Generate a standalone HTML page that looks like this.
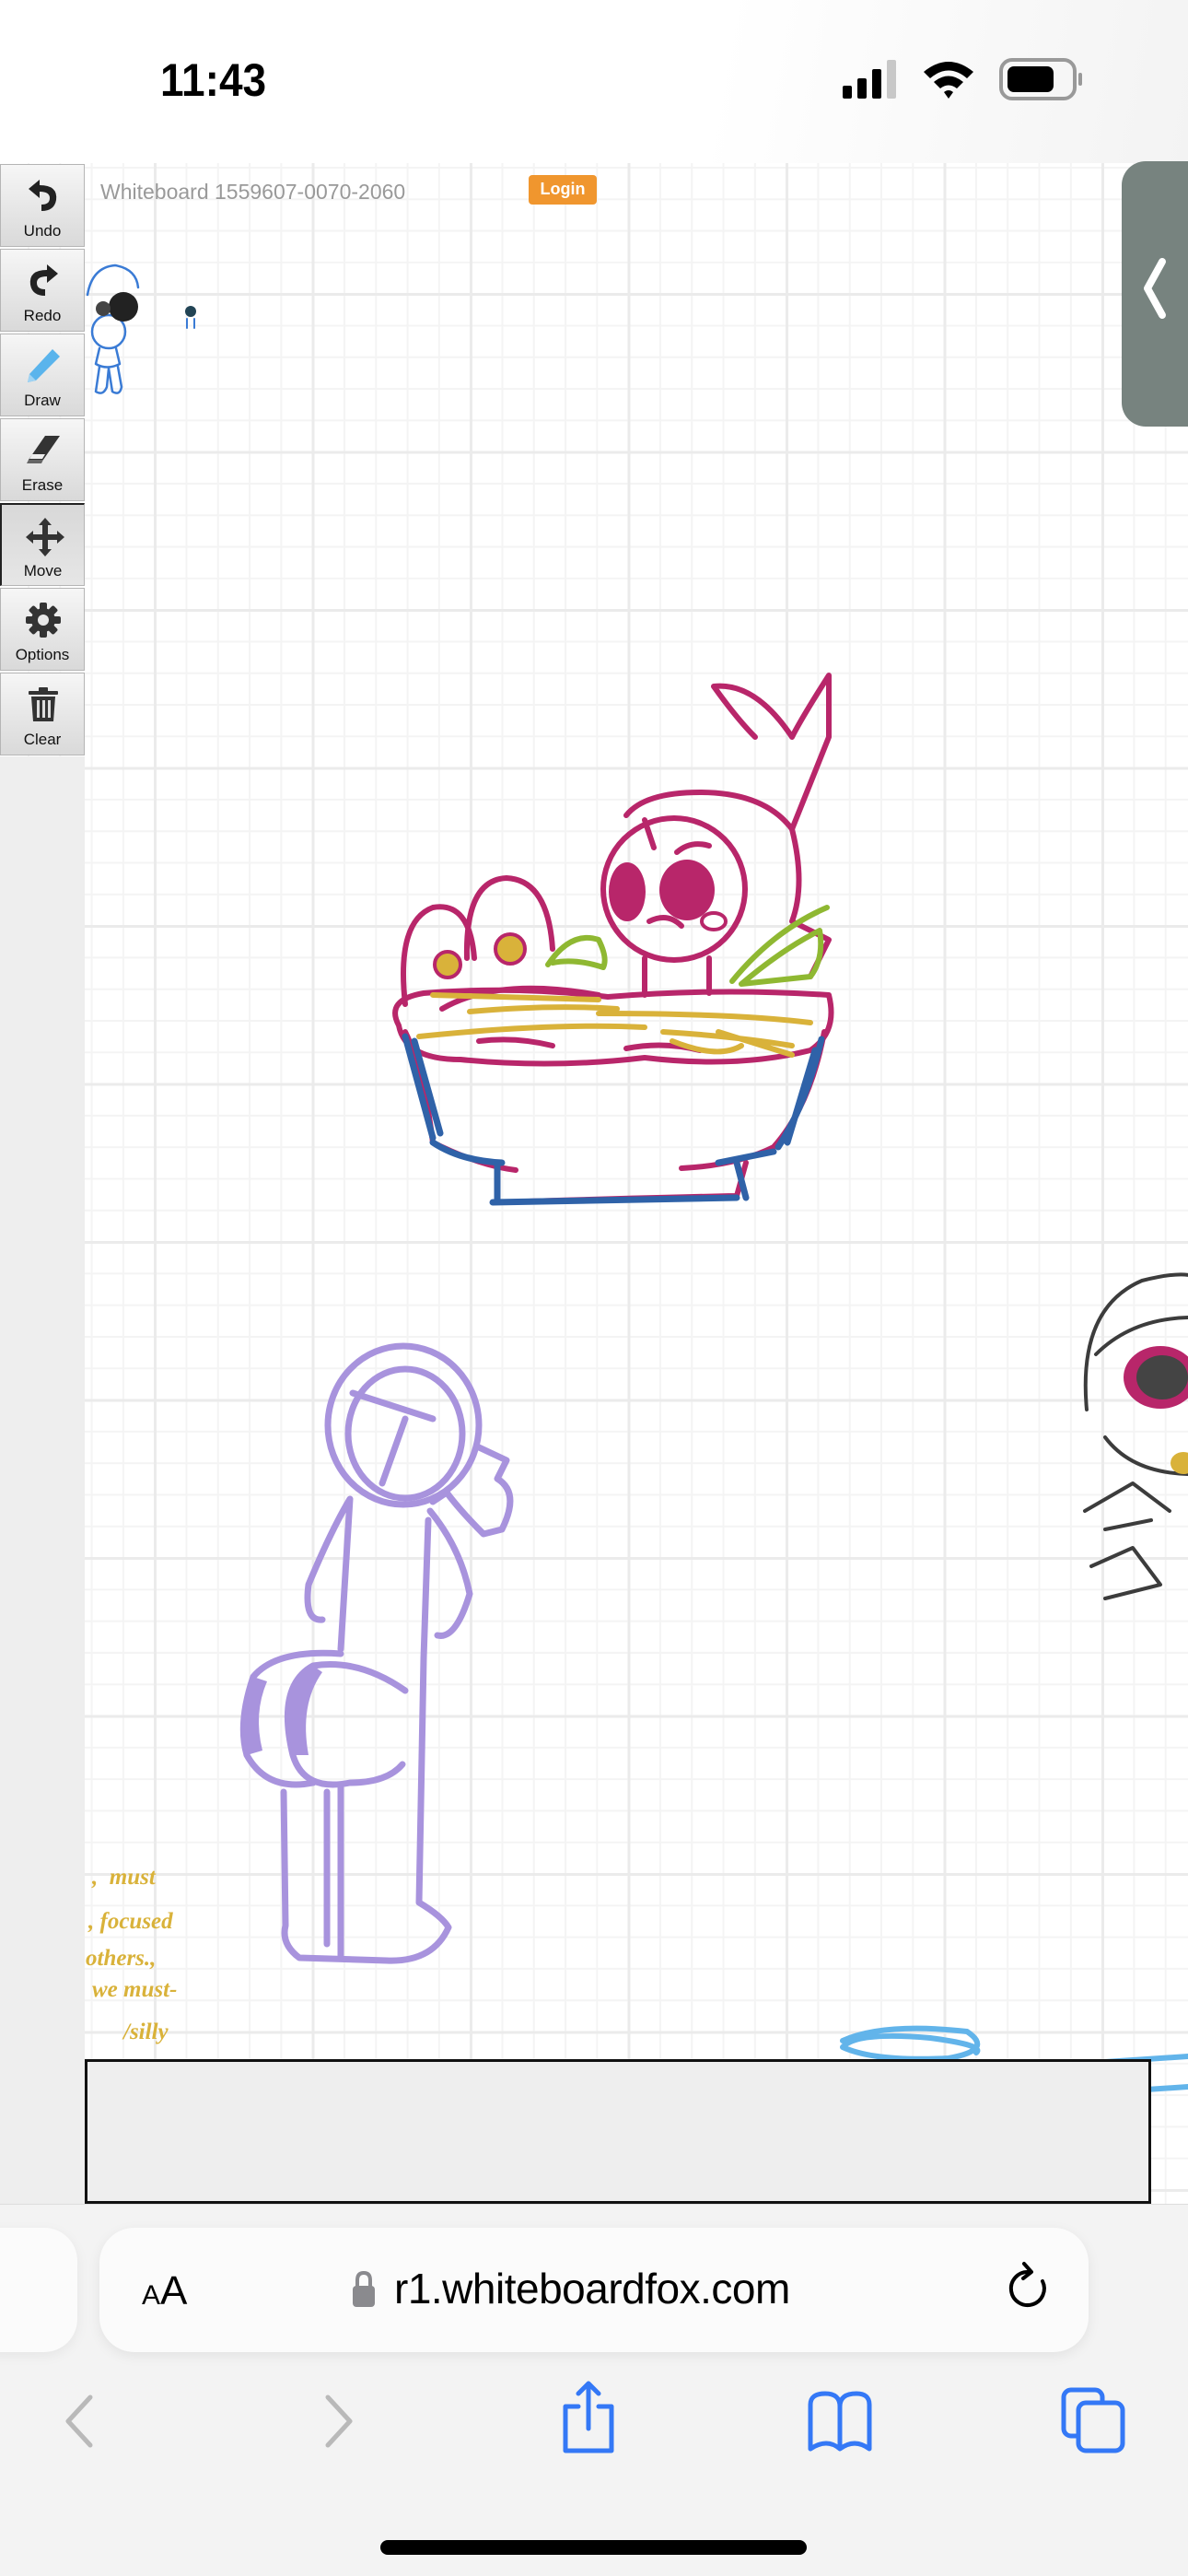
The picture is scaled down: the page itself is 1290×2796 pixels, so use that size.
<!DOCTYPE html>
<html><head><meta charset="utf-8">
<style>
*{margin:0;padding:0;box-sizing:border-box}
html,body{width:1290px;height:2796px;overflow:hidden;background:#fff;font-family:"Liberation Sans",sans-serif}
#canvas{position:absolute;left:0;top:177px;width:1290px;height:2215px;background-color:#fff;
background-image:
linear-gradient(to right,#ebebeb 0,#ebebeb 3px,transparent 3px),
linear-gradient(to bottom,#ebebeb 0,#ebebeb 3px,transparent 3px),
linear-gradient(to right,#f4f4f4 0,#f4f4f4 2px,transparent 2px),
linear-gradient(to bottom,#f4f4f4 0,#f4f4f4 2px,transparent 2px);
background-size:171.5px 100%,100% 171.5px,34.3px 100%,100% 34.3px;
background-position:167px 0,0 141px,30px 0,0 4px}
.btn{position:absolute;left:0;width:92px;height:90px;background:linear-gradient(#f6f6f6,#d9d9d9);border:1px solid #b5b5b5;text-align:center}
.btn span{position:absolute;left:0;right:0;top:62px;font-size:17px;color:#111}
.btn svg{position:absolute;left:26px;top:14px}
.mv{border-left:2px solid #222;border-top:2px solid #222;background:linear-gradient(#d8d8d8,#e6e6e6)}
.yt div{position:absolute;white-space:nowrap}
</style></head><body>
<div id="canvas"></div>
<div style="position:absolute;left:0;top:821px;width:92px;height:1571px;background:#eeeeee"></div>
<!-- status bar -->
<div style="position:absolute;left:0;top:0;width:1290px;height:177px;background:linear-gradient(100deg,#fff 60%,#f3f3f3)"></div>
<div style="position:absolute;left:174px;top:58px;font-size:50px;font-weight:bold;color:#000;transform:scaleX(0.92);transform-origin:left">11:43</div>
<svg style="position:absolute;left:910px;top:60px" width="270" height="52" viewBox="0 0 270 52">
<rect x="5" y="33" width="10" height="14" rx="2"/><rect x="21" y="25" width="10" height="22" rx="2"/><rect x="37" y="15" width="10" height="32" rx="2"/><rect x="53" y="5" width="10" height="42" rx="2" fill="#c8c8c8"/>
<path d="M93 18 Q120 -4 147 18 L140 25 Q120 8 100 25Z M104 29 Q120 16 136 29 L129 36 Q120 29 111 36Z M115 40 Q120 36 125 40 L120 47Z"/>
<rect x="177" y="5" width="80" height="42" rx="12" fill="none" stroke="#999" stroke-width="4"/><rect x="184" y="12" width="50" height="28" rx="7"/><rect x="261" y="19" width="4" height="14" rx="2" fill="#999"/>
</svg>
<!-- toolbar -->
<div class="btn" style="top:178px"><svg width="40" height="40" viewBox="0 0 40 40"><path d="M4 12 L16 2 L16 8 Q36 8 34 24 Q32 36 18 36 L18 29 Q27 29 27 22 Q27 15 16 15 L16 22Z" fill="#222"/></svg><span>Undo</span></div>
<div class="btn" style="top:270px"><svg width="40" height="40" viewBox="0 0 40 40"><path d="M36 12 L24 2 L24 8 Q4 8 6 24 Q8 36 22 36 L22 29 Q13 29 13 22 Q13 15 24 15 L24 22Z" fill="#222"/></svg><span>Redo</span></div>
<div class="btn" style="top:362px"><svg width="40" height="40" viewBox="0 0 40 40"><path d="M30 2 L38 10 L12 36 L3 38 L5 29Z" fill="#5ab4ec"/><path d="M5 29 L3 38 L12 36Z" fill="#9fd3f3"/></svg><span>Draw</span></div>
<div class="btn" style="top:454px"><svg width="40" height="40" viewBox="0 0 40 40"><path d="M22 4 L38 4 L20 30 L4 30Z" fill="#333"/><path d="M4 30 L20 30 L18 34 L2 34Z" fill="#666"/><path d="M8 24 L22 24 L19 29 L5 29Z" fill="#eee"/></svg><span>Erase</span></div>
<div class="btn mv" style="top:546px"><svg width="42" height="42" viewBox="0 0 42 42"><path d="M21 0 L28 8 L24 8 L24 18 L34 18 L34 14 L42 21 L34 28 L34 24 L24 24 L24 34 L28 34 L21 42 L14 34 L18 34 L18 24 L8 24 L8 28 L0 21 L8 14 L8 18 L18 18 L18 8 L14 8Z" fill="#333"/></svg><span>Move</span></div>
<div class="btn" style="top:638px"><svg width="40" height="40" viewBox="0 0 40 40"><g fill="#333"><circle cx="20" cy="20" r="13"/><rect x="16" y="1" width="8" height="38" rx="2"/><rect x="16" y="1" width="8" height="38" rx="2" transform="rotate(45 20 20)"/><rect x="16" y="1" width="8" height="38" rx="2" transform="rotate(90 20 20)"/><rect x="16" y="1" width="8" height="38" rx="2" transform="rotate(135 20 20)"/></g><circle cx="20" cy="20" r="6" fill="#e8e8e8"/></svg><span>Options</span></div>
<div class="btn" style="top:730px"><svg width="40" height="40" viewBox="0 0 40 40"><g fill="#333"><rect x="4" y="5" width="32" height="4" rx="1"/><rect x="15" y="1" width="10" height="5" rx="1"/><path d="M7 11 L33 11 L31 38 L9 38Z"/></g><g fill="#ddd"><rect x="13" y="15" width="3" height="19"/><rect x="19" y="15" width="3" height="19"/><rect x="25" y="15" width="3" height="19"/></g></svg><span>Clear</span></div>
<div style="position:absolute;left:109px;top:195px;font-size:23px;color:#999">Whiteboard 1559607-0070-2060</div>
<div style="position:absolute;left:574px;top:190px;width:74px;height:32px;background:#f0962e;border-radius:4px;color:#fff;font-weight:bold;font-size:18px;text-align:center;line-height:30px">Login</div>
<!-- right tab -->
<div style="position:absolute;left:1218px;top:175px;width:90px;height:288px;background:#77837f;border-radius:26px 0 0 26px"></div>
<svg style="position:absolute;left:1238px;top:278px" width="30" height="70" viewBox="0 0 30 70"><path d="M24 6 L8 35 L24 64" stroke="#fff" stroke-width="8" fill="none" stroke-linecap="round" stroke-linejoin="round"/></svg>
<!-- drawings -->
<svg style="position:absolute;left:0;top:0" width="1290" height="2796" viewBox="0 0 1290 2796" fill="none" stroke-linecap="round" stroke-linejoin="round">
<g stroke="#3a7bd5" stroke-width="2.5">
<path d="M95 320 Q100 290 125 288 Q148 292 150 312"/><ellipse cx="118" cy="360" rx="18" ry="18"/><path d="M108 378 L104 395 Q116 402 130 395 L126 378"/><path d="M108 398 L104 425 Q112 430 116 420 L118 400 L122 425 Q130 430 132 420 L128 398"/>
</g>
<circle cx="134" cy="333" r="16" fill="#222"/><circle cx="112" cy="335" r="8" fill="#444"/>
<circle cx="207" cy="338" r="6" fill="#245" /><path d="M203 346 L203 356 M211 346 L211 356" stroke="#3a7bd5" stroke-width="2"/>
<g stroke="#b8266a" stroke-width="6">
<path d="M433 1113 Q418 1085 460 1078 Q560 1070 660 1082 Q780 1072 900 1080 Q910 1120 880 1140 Q800 1160 700 1148 Q600 1160 500 1150 Q440 1150 433 1113Z"/>
<path d="M440 1120 Q460 1160 470 1240 Q520 1265 560 1270 M895 1120 Q880 1200 840 1245 Q800 1265 740 1268"/>
<path d="M540 1265 L540 1305 Q700 1300 800 1298 L810 1262"/>
<path d="M440 1090 Q430 1000 470 985 Q510 978 515 1040 M507 1040 Q505 955 550 953 Q595 955 600 1030"/>
<path d="M480 1095 Q540 1060 650 1080 M520 1130 Q560 1125 600 1135 M680 1138 Q720 1130 760 1140"/>
<circle cx="732" cy="965" r="77"/>
<path d="M680 885 Q700 860 760 860 Q830 860 860 900 Q880 850 900 800 L900 733 Q870 780 860 800 Q820 740 775 745 Q800 780 820 800"/>
<path d="M860 900 Q875 960 860 1000 L900 1020 L880 1060"/>
<path d="M700 1040 L700 1080 M770 1040 L770 1078 M705 1000 Q725 990 740 1005"/>
<path d="M700 890 L710 920 M735 925 Q750 912 770 918"/>
</g>
<ellipse cx="681" cy="968" rx="20" ry="32" fill="#b8266a"/>
<ellipse cx="746" cy="966" rx="30" ry="33" fill="#b8266a"/>
<ellipse cx="775" cy="1000" rx="13" ry="9" fill="#fff" stroke="#b8266a" stroke-width="4"/>
<circle cx="486" cy="1047" r="14" fill="#d9b23a" stroke="#b8266a" stroke-width="4"/>
<circle cx="554" cy="1030" r="16" fill="#d9b23a" stroke="#b8266a" stroke-width="4"/>
<g stroke="#d9b23a" stroke-width="6">
<path d="M470 1080 L650 1085 M510 1098 Q600 1090 670 1095 M455 1125 Q600 1110 700 1115 M650 1100 Q800 1100 880 1110 M720 1120 Q800 1125 860 1135 M730 1130 Q780 1150 805 1135 M780 1120 L860 1145"/>
</g>
<g stroke="#8fb832" stroke-width="6">
<path d="M595 1047 Q620 1010 650 1020 Q660 1040 655 1050 Q625 1040 600 1045 M795 1065 Q840 1010 898 985 M805 1068 Q850 1030 890 1010 Q895 1040 880 1060Z"/>
</g>
<g stroke="#2f62a8" stroke-width="7">
<path d="M440 1125 Q455 1180 470 1235 M450 1130 L478 1230 M470 1240 Q500 1260 545 1262 M540 1262 L540 1305 M535 1305 L800 1300 M800 1262 L810 1300 M780 1262 L840 1250 M892 1128 Q875 1200 845 1245 M885 1140 L855 1240"/>
</g>
<g stroke="#a893dd" stroke-width="7">
<ellipse cx="438" cy="1547" rx="82" ry="86"/>
<ellipse cx="440" cy="1556" rx="62" ry="70"/>
<path d="M383 1512 L470 1540 M440 1540 L415 1610"/>
<path d="M518 1570 L550 1585 L540 1605 Q565 1620 545 1660 L525 1665 Q500 1640 485 1620 L470 1630"/>
<path d="M380 1627 Q360 1660 335 1720 Q330 1760 350 1758 M380 1627 L370 1790"/>
<path d="M467 1640 Q500 1680 510 1730 Q495 1780 475 1775 M465 1650 L460 1800 L455 2065 Q480 2080 487 2092 Q470 2130 420 2128 L325 2125 Q305 2110 310 2090 L308 1945"/>
<path d="M370 1795 Q300 1790 275 1820 Q258 1870 268 1905 Q290 1945 340 1935 M340 1808 Q300 1830 318 1905 Q330 1945 380 1935 Q420 1935 437 1915 M340 1808 Q390 1800 440 1835"/>
<path d="M370 1940 L370 2125 M355 1945 L355 2110"/>
</g>
<path d="M275 1820 Q258 1870 268 1905 L285 1900 Q275 1860 290 1825Z M340 1808 Q300 1830 318 1905 L335 1905 Q325 1850 350 1815Z" fill="#a893dd"/>
<g stroke="#3c3c3c" stroke-width="4">
<path d="M1180 1530 Q1170 1420 1240 1390 Q1280 1380 1295 1385 M1190 1470 Q1230 1430 1295 1430 M1200 1560 Q1230 1600 1295 1600 M1178 1640 L1230 1610 L1270 1640 M1185 1700 L1230 1680 L1260 1720 L1200 1735 M1200 1660 L1250 1650"/>
</g>
<ellipse cx="1260" cy="1495" rx="40" ry="34" fill="#b8266a"/>
<ellipse cx="1262" cy="1495" rx="28" ry="24" fill="#444"/>
<ellipse cx="1285" cy="1588" rx="14" ry="12" fill="#d9b23a"/>
<g stroke="#62b4ea" stroke-width="6">
<path d="M915 2215 Q960 2195 1050 2205 Q1080 2225 1030 2234 Q950 2238 915 2222 Q930 2205 1010 2212 Q1070 2220 1060 2228"/>
<path d="M1200 2238 L1290 2232 M1215 2270 L1290 2265"/>
</g>
</svg>
<div class="yt" style="position:absolute;left:0;top:0;color:#d9b23a;font-style:italic;font-weight:bold;font-size:25px;font-family:'Liberation Serif',serif">
<div style="left:100px;top:2024px">,&nbsp; must</div>
<div style="left:96px;top:2072px">, focused</div>
<div style="left:93px;top:2112px">others.,</div>
<div style="left:100px;top:2146px">we must-</div>
<div style="left:134px;top:2192px">/silly</div>
</div>
<div style="position:absolute;left:92px;top:2235px;width:1158px;height:157px;background:#eeeeee;border:3px solid #111"></div>
<div style="position:absolute;left:0;top:2392px;width:1290px;height:404px;background:#f3f3f3;border-top:1px solid #ddd"></div>
<div style="position:absolute;left:-40px;top:2418px;width:124px;height:135px;background:#fbfbfb;border-radius:36px;box-shadow:0 4px 14px rgba(0,0,0,.06)"></div>
<div style="position:absolute;left:108px;top:2418px;width:1074px;height:135px;background:#fbfbfb;border-radius:38px;box-shadow:0 4px 14px rgba(0,0,0,.07)"></div>
<div style="position:absolute;left:154px;top:2462px;font-size:44px;color:#000"><span style="font-size:30px">A</span>A</div>
<svg style="position:absolute;left:380px;top:2464px" width="30" height="42" viewBox="0 0 30 42"><path d="M8 18 L8 11 Q8 3 15 3 Q22 3 22 11 L22 18" stroke="#8a8a8e" stroke-width="4" fill="none"/><rect x="3" y="17" width="24" height="23" rx="4" fill="#8a8a8e"/></svg>
<div style="position:absolute;left:428px;top:2457px;font-size:46px;color:#000;letter-spacing:-0.5px">r1.whiteboardfox.com</div>
<svg style="position:absolute;left:1092px;top:2454px" width="48" height="60" viewBox="0 0 48 60"><path d="M24 12 A18 18 0 1 0 40 22" stroke="#000" stroke-width="4" fill="none" stroke-linecap="round"/><path d="M20 3 L28 12 L19 19" stroke="#000" stroke-width="4" fill="none" stroke-linecap="round" stroke-linejoin="round"/></svg>
<svg style="position:absolute;left:0;top:2580px" width="1290" height="100" viewBox="0 0 1290 100" fill="none" stroke-linecap="round" stroke-linejoin="round">
<path d="M98 22 L74 48 L98 74" stroke="#b9b9b9" stroke-width="5"/>
<path d="M356 22 L380 48 L356 74" stroke="#b9b9b9" stroke-width="5"/>
<g stroke="#3478f6" stroke-width="5">
<path d="M628 32 L614 32 L614 80 L664 80 L664 32 L650 32 M639 56 L639 8 M628 18 L639 7 L650 18"/>
<path d="M880 78 L880 30 Q880 18 896 18 Q912 18 912 32 L912 78 Q898 66 880 78 M912 32 Q912 18 930 18 Q944 18 944 30 L944 78 Q928 66 912 78"/>
<rect x="1155" y="14" width="42" height="50" rx="8"/><rect x="1171" y="28" width="48" height="52" rx="8" fill="#f3f3f3"/>
</g>
</svg>
<div style="position:absolute;left:413px;top:2757px;width:463px;height:16px;background:#000;border-radius:8px"></div>
</body></html>
